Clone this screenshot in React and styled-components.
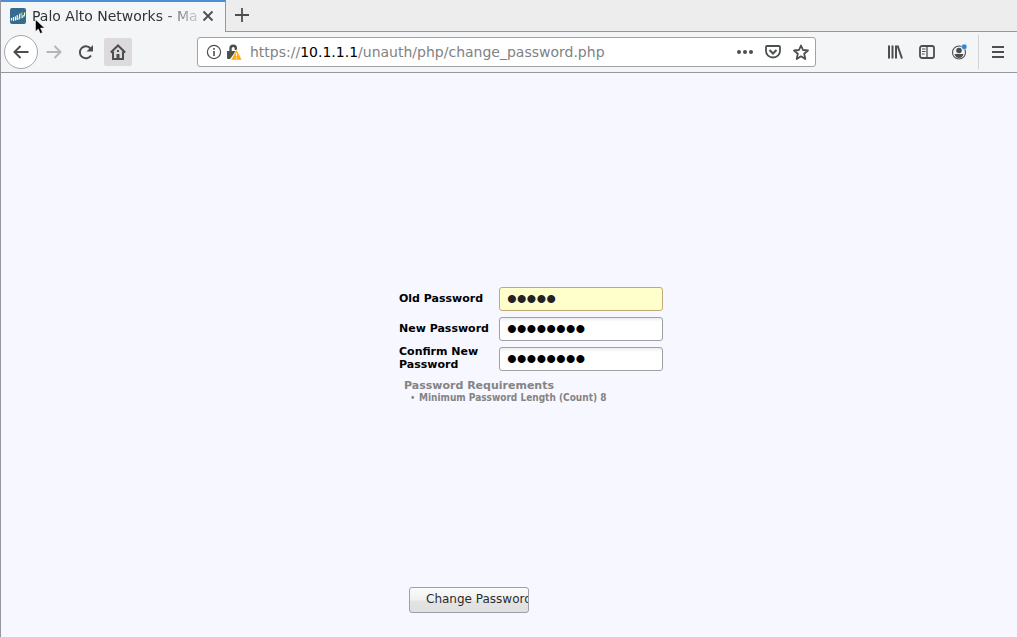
import React, { useState } from 'react'
import styled, { createGlobalStyle } from 'styled-components'

const GlobalStyle = createGlobalStyle`
  *, *::before, *::after {
    box-sizing: border-box;
  }
  body {
    margin: 0;
    background: #f7f7ff;
    font-family: 'DejaVu Sans', sans-serif;
  }
`

const Window = styled.div`
  display: flex;
  flex-direction: column;
  min-height: 100vh;
  border-left: 1px solid #97979b;
`

const TabStrip = styled.div`
  display: flex;
  height: 32px;
  background: #ededed;
`

const Tab = styled.div`
  position: relative;
  display: flex;
  align-items: center;
  width: 225px;
  padding: 0 8px 2px 9px;
  border-top: 2px solid #4a90d9;
  border-right: 1px solid #97979b;
  background: #f4f5f7;
`

const TabTitle = styled.span`
  flex: 1;
  margin-left: 6px;
  overflow: hidden;
  white-space: nowrap;
  font-size: 14px;
  line-height: 20px;
  color: #2e3436;
  mask-image: linear-gradient(to right, #000 76%, transparent 105%);
`

const StripRest = styled.div`
  flex: 1;
  display: flex;
  align-items: center;
  padding: 0 0 2px 3px;
  border-bottom: 1px solid #97979b;
`

const IconButton = styled.button`
  display: grid;
  place-items: center;
  width: ${({ $width }) => $width || 28}px;
  height: 28px;
  padding: 0;
  border: none;
  border-radius: 2px;
  background: ${({ $active }) => ($active ? '#dcdadd' : 'transparent')};
  color: ${({ disabled }) => (disabled ? '#b5b6b8' : '#4b4f50')};
`

const BackButton = styled(IconButton)`
  width: 34px;
  height: 34px;
  border: 1px solid #a7a7ab;
  border-radius: 50%;
  background: #fff;
`

const Toolbar = styled.div`
  display: flex;
  align-items: center;
  gap: 2px;
  height: 41px;
  padding: 0 5px 0 3px;
  border-bottom: 1px solid #97979b;
  background: #f4f5f7;
`

const AddressBar = styled.div`
  flex: 1;
  display: flex;
  align-items: center;
  height: 30px;
  margin: 0 63px;
  padding: 0 0 0 8px;
  border: 1px solid #a3a3a7;
  border-radius: 3px;
  background: #fff;
  color: #4b4f50;
`

const Url = styled.span`
  flex: 1;
  margin-left: 8px;
  overflow: hidden;
  white-space: nowrap;
  font-size: 14px;
  line-height: 20px;
  color: #808283;
`

const Host = styled.span`
  color: #000;
`

const Tools = styled.div`
  display: flex;
  align-items: center;
  gap: 4px;
`

const Separator = styled.div`
  width: 1px;
  height: 34px;
  margin: 0 1px;
  background: #d3d4d8;
`

const Cursor = styled.svg`
  position: absolute;
  top: 17px;
  left: 34px;
`

const Main = styled.main`
  flex: 1;
  padding-top: 214px;
`

const Form = styled.form`
  display: flex;
  flex-direction: column;
  width: 310px;
  margin: 0 auto;
  padding-left: 45px;
`

const Fields = styled.div`
  display: grid;
  gap: 6px;
`

const Field = styled.div`
  display: grid;
  grid-template-columns: 100px 164px;
  grid-template-rows: 24px;
  align-items: center;
`

const Label = styled.label`
  padding-bottom: 2px;
  font-size: 11px;
  font-weight: bold;
  line-height: 13px;
  color: #000;
`

const PasswordInput = styled.input`
  width: 100%;
  height: 24px;
  padding: 0 7px;
  border: 1px solid ${({ $filled }) => ($filled ? '#c3a878' : '#a09fa5')};
  border-radius: 3px;
  background: ${({ $filled }) =>
    $filled ? '#ffffcc' : 'linear-gradient(#ededee, #fff 4px)'};
  color: ${({ $filled }) => ($filled ? '#222' : '#000')};
  font-family: 'Liberation Sans', sans-serif;
  font-size: 28px;
  font-weight: bold;
  line-height: 22px;
  &:focus {
    outline: none;
  }
`

const Requirements = styled.section`
  margin: 8px 0 0 5px;
  color: #848484;
`

const RequirementsTitle = styled.h2`
  margin: 0;
  font-size: 11px;
  line-height: 13px;
`

const RequirementsList = styled.ul`
  margin: 0;
  padding-left: 6px;
  list-style: none;
  font-family: 'DejaVu Sans Condensed', 'DejaVu Sans', sans-serif;
  font-size: 10px;
  font-weight: bold;
  line-height: 12px;
`

const Requirement = styled.li`
  display: flex;
  &::before {
    content: '•';
    width: 9px;
    font-weight: normal;
  }
`

const SubmitButton = styled.button`
  width: 120px;
  height: 26px;
  margin: 183px 0 0 10px;
  padding: 0 0 2px 16px;
  overflow: hidden;
  border: 1px solid #a09fa5;
  border-radius: 3px;
  background: linear-gradient(#fbfbfb, #f0f0f0 50%, #e3e3e4 55%, #e0e0e1);
  color: #2b2b2b;
  font-family: 'DejaVu Sans', sans-serif;
  font-size: 12px;
  text-align: left;
  white-space: nowrap;
`

const Icon = ({ size = 16, children }) => (
  <svg width={size} height={size} viewBox="0 0 16 16" fill="none" stroke="currentColor" strokeWidth="2" aria-hidden="true">
    {children}
  </svg>
)

const Favicon = () => (
  <svg width="16" height="16" viewBox="0 0 16 16" fill="none" aria-hidden="true">
    <rect width="16" height="16" rx="2" fill="#356b8f" />
    <path d="M1.5 12.5V10M3.5 13V9M5.5 12.5V8.5M7.2 12V7M9 11.5L10 5.5M14 8.500L14.800 4.500" stroke="#fff" strokeWidth="1.2" />
    <path d="M11 10.5L12 4.5" stroke="#a9c83c" strokeWidth="1.4" />
    <path d="M12.500 10L13.200 7" stroke="#fff" strokeWidth="1" />
  </svg>
)

const LockIcon = () => (
  <svg width="16" height="16" viewBox="0 0 16 16" fill="none" aria-hidden="true">
    <path d="M4.5 8V4.5a2.700 2.700 0 0 1 5.400 0V6" stroke="#4b4f50" strokeWidth="2.4" />
    <path d="M1 7h9l-6 8H2a1 1 0 0 1-1-1z" fill="#4b4f50" />
    <path d="M10.5 5.5L16 16H5z" fill="#ffaa0d" stroke="#fff" strokeWidth=".5" strokeLinejoin="round" />
    <path d="M10.5 9v3.2M10.5 13.3v1.2" stroke="#fff" strokeWidth="1.2" />
  </svg>
)

const fields = [
  { id: 'old', label: 'Old Password', value: '12345', filled: true },
  { id: 'new', label: 'New Password', value: '12345678' },
  { id: 'confirm', label: 'Confirm New Password', value: '12345678' },
]

const PasswordField = ({ id, label, value, filled }) => {
  const [password, setPassword] = useState(value)
  return (
    <Field>
      <Label htmlFor={id}>{label}</Label>
      <PasswordInput
        type="password"
        id={id}
        $filled={filled}
        value={password}
        onChange={(e) => setPassword(e.target.value)}
      />
    </Field>
  )
}

const App = () => {
  return (
    <>
      <GlobalStyle />
      <Window>
        <TabStrip>
          <Tab>
            <Favicon />
            <TabTitle>Palo Alto Networks - Man</TabTitle>
            <IconButton $width={18} aria-label="Close tab">
              <Icon><path d="M3.5 3.5l9 9M12.5 3.5l-9 9" strokeWidth="1.8" /></Icon>
            </IconButton>
            <Cursor width="12" height="16" viewBox="0 0 12 16" aria-hidden="true">
              <path d="M.5 .5v12l2.8-2.6 2 4.6 2.2-1-2-4.4h4z" fill="#000" stroke="#fff" strokeWidth=".5" />
            </Cursor>
          </Tab>
          <StripRest>
            <IconButton $width={26} aria-label="New tab">
              <Icon><path d="M8 1v14M1 8h14" strokeWidth="1.8" /></Icon>
            </IconButton>
          </StripRest>
        </TabStrip>
        <Toolbar>
          <BackButton aria-label="Back">
            <Icon><path d="M15.5 8H1.5M7.5 2L1.5 8l6 6" /></Icon>
          </BackButton>
          <Tools>
            <IconButton aria-label="Forward" disabled>
              <Icon><path d="M.5 8h14M8.5 2l6 6-6 6" /></Icon>
            </IconButton>
            <IconButton aria-label="Reload">
              <Icon>
                <path d="M13 11.5A6 6 0 1 1 12.5 4.5" />
                <path d="M15 1v6.5H8.5z" fill="currentColor" stroke="none" />
              </Icon>
            </IconButton>
            <IconButton $active aria-label="Home">
              <Icon>
                <path d="M.8 8.5L8 1.5l7.2 7M3 7.5V15h10V7.5" strokeWidth="2" />
                <path d="M6.5 15v-5h3v5zM7 6h2v2H7z" fill="currentColor" stroke="none" />
              </Icon>
            </IconButton>
          </Tools>
          <AddressBar>
            <Tools>
              <Icon>
                <circle cx="8" cy="8" r="6.6" strokeWidth="1.2" />
                <path d="M8 7v5M8 4v1.8" strokeWidth="1.6" />
              </Icon>
              <LockIcon />
            </Tools>
            <Url>
              https://<Host>10.1.1.1</Host>/unauth/php/change_password.php
            </Url>
            <IconButton aria-label="Page actions">
              <Icon>
                <g fill="currentColor" stroke="none">
                  <circle cx="2" cy="8" r="2" />
                  <circle cx="8" cy="8" r="2" />
                  <circle cx="14" cy="8" r="2" />
                </g>
              </Icon>
            </IconButton>
            <IconButton aria-label="Save to Pocket">
              <Icon>
                <path d="M2 2h12a1 1 0 0 1 1 1v4a7 6.5 0 0 1-14 0V3a1 1 0 0 1 1-1z" strokeWidth="1.8" />
                <path d="M4.5 6L8 9.5 11.5 6" />
              </Icon>
            </IconButton>
            <IconButton aria-label="Bookmark">
              <Icon>
                <path d="M8 1.5l2 4.5 5 .5-3.8 3.3L12.3 15 8 12.3 3.7 15l1.1-5.2L1 6.5 6 6z" strokeWidth="1.8" strokeLinejoin="round" />
              </Icon>
            </IconButton>
          </AddressBar>
          <Tools>
            <IconButton aria-label="Library">
              <Icon><path d="M2 1.500v13M5.500 1.500v13M9 1.500v13M10.500 1.500l4.500 13" strokeWidth="2" /></Icon>
            </IconButton>
            <IconButton aria-label="Sidebars">
              <Icon>
                <rect x="1" y="2" width="14" height="12" rx="2" strokeWidth="1.8" />
                <path d="M8 2v12" strokeWidth="1.3" />
                <path d="M3 5h3.5M3 7.5h3.5M3 10h2.5" strokeWidth="1" />
              </Icon>
            </IconButton>
            <IconButton aria-label="Account">
              <Icon>
                <circle cx="8" cy="8.5" r="6.5" strokeWidth="1.1" />
                <circle cx="8" cy="6.5" r="2.800" fill="currentColor" stroke="none" />
                <path d="M3.500 10h9q-1 4-4.500 4t-4.500-4z" fill="currentColor" stroke="none" />
                <circle cx="13.200" cy="2.8" r="2.800" fill="#3584d8" stroke="#f4f5f7" strokeWidth=".6" />
              </Icon>
            </IconButton>
            <Separator />
            <IconButton aria-label="Menu">
              <Icon><path d="M2 3h12M2 8h12M2 13h12" /></Icon>
            </IconButton>
          </Tools>
        </Toolbar>
        <Main>
          <Form onSubmit={(e) => e.preventDefault()}>
            <Fields>
              {fields.map((field) => (
                <PasswordField key={field.id} {...field} />
              ))}
            </Fields>
            <Requirements>
              <RequirementsTitle>Password Requirements</RequirementsTitle>
              <RequirementsList>
                <Requirement>Minimum Password Length (Count) 8</Requirement>
              </RequirementsList>
            </Requirements>
            <SubmitButton type="submit">Change Password</SubmitButton>
          </Form>
        </Main>
      </Window>
    </>
  )
}

export default App
